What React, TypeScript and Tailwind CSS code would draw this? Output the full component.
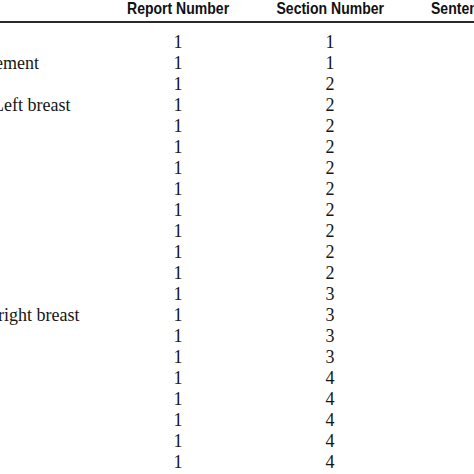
const sections = [1, 1, 2, 2, 2, 2, 2, 2, 2, 2, 2, 2, 3, 3, 3, 3, 4, 4, 4, 4, 4];

// left labels: text plus its own indent, the start of each is cut off by the page edge
const labels: Record<number, { text: string; indent: string }> = {
  1: { text: "Enhancement", indent: "pl-[1px]" },
  3: { text: "Left breast", indent: "pl-[53px]" },
  13: { text: "right breast", indent: "pl-[58px]" },
};

export default function App() {
  return (
    <div className="w-[474px] h-[474px] overflow-hidden bg-white">
      <div className="-ml-[60px] w-[594px]">
        {/* Header */}
        <div
          className="grid grid-cols-[178px_120px_184px_1fr] h-[21px] items-start leading-none text-[16.5px] font-bold text-[#111]"
          style={{ fontFamily: '"Liberation Sans", Arial, sans-serif' }}
        >
          <div />
          <div className="flex justify-center">
            <span className="inline-block whitespace-nowrap scale-x-[0.85]">Report Number</span>
          </div>
          <div className="flex justify-center">
            <span className="inline-block whitespace-nowrap scale-x-[0.85]">Section Number</span>
          </div>
          <div className="pl-[9px]">
            <span className="inline-block whitespace-nowrap scale-x-[0.85] origin-left">Sentence Number</span>
          </div>
        </div>
        <div className="h-[1.5px] bg-[#2a2a2a]" />

        {/* Body */}
        <div
          className="pt-[9px] text-[18px] text-[#161616]"
          style={{ fontFamily: '"Liberation Serif", serif' }}
        >
          {sections.map((s, i) => (
            <div key={i} className="grid grid-cols-[178px_120px_184px_1fr] h-[21px] items-center leading-none">
              <div className={`whitespace-nowrap ${labels[i]?.indent ?? ""}`}>{labels[i]?.text ?? ""}</div>
              <div className="text-center">1</div>
              <div className="text-center">{s}</div>
              <div />
            </div>
          ))}
        </div>
      </div>
    </div>
  );
}
